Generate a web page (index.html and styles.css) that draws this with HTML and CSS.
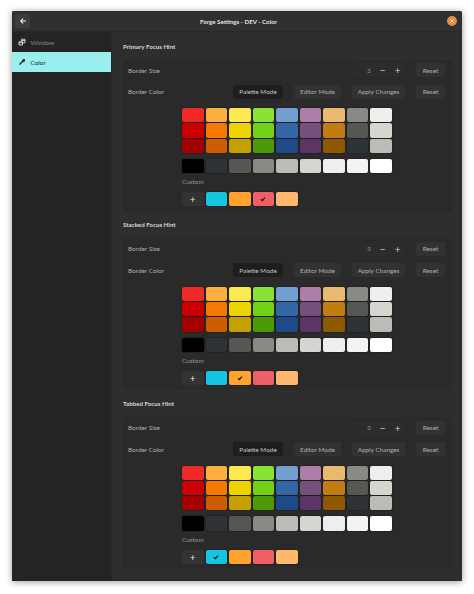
FILE: index.html
```html
<!DOCTYPE html>
<html lang="en">
<head>
<meta charset="utf-8">
<title>Forge Settings - DEV - Color</title>
<link rel="stylesheet" href="styles.css">
</head>
<body>
<div class="window">
  <header class="titlebar">
    <button class="back"><svg viewBox="0 0 16 16" class="ico"><path d="M14 7H6l3-3-1.500-1.500L2 8l5.500 5.500L9 12 6 9h8z" fill="#f2f2f2"/></svg></button>
    <div class="title">Forge Settings - DEV - Color</div>
    <button class="close"><svg viewBox="0 0 10 10" class="close-ico"><path d="M3.200 3.200l3.600 3.600M6.800 3.200l-3.600 3.600" stroke="#fbe3cf" stroke-width="1"/></svg></button>
  </header>
  <div class="body">
    <nav class="sidebar">
      <div class="nav-item"><svg viewBox="0 0 16 16" class="nav-ico"><path d="M6 2.500h8v7H9M2 7.500h7v6.500H2zM6 5h8M2 9.500h7" fill="none" stroke="#dcdcdc" stroke-width="1.800"/></svg><span>Window</span></div>
      <div class="nav-item selected"><svg viewBox="0 0 16 16" class="nav-ico"><path d="M2 14l1-3 5.500-5.500 2 2L5 13z" fill="#222"/><path d="M9 3.500l3-2.200 2.700 2.700-2.200 3 .8.800-1.300 1.300-4.300-4.300 1.300-1.300z" fill="#222"/></svg><span>Color</span></div>
    </nav>
    <main class="content">

      <section class="group">
        <h2>Primary Focus Hint</h2>
        <div class="frame">
          <div class="row">
            <span class="label">Border Size</span>
            <div class="spin"><span class="val">3</span><span class="op">−</span><span class="op">+</span></div>
            <button class="btn reset">Reset</button>
          </div>
          <div class="row">
            <span class="label">Border Color</span>
            <button class="btn active">Palette Mode</button>
            <button class="btn editor">Editor Mode</button>
            <button class="btn apply">Apply Changes</button>
            <button class="btn reset">Reset</button>
          </div>
          <div class="palette">
            <div class="grid">
              <i class="s c01"></i><i class="s c02"></i><i class="s c03"></i><i class="s c04"></i><i class="s c05"></i><i class="s c06"></i><i class="s c07"></i><i class="s c08"></i><i class="s c09"></i>
              <i class="s c11"></i><i class="s c12"></i><i class="s c13"></i><i class="s c14"></i><i class="s c15"></i><i class="s c16"></i><i class="s c17"></i><i class="s c18"></i><i class="s c19"></i>
              <i class="s c21"></i><i class="s c22"></i><i class="s c23"></i><i class="s c24"></i><i class="s c25"></i><i class="s c26"></i><i class="s c27"></i><i class="s c28"></i><i class="s c29"></i>
            </div>
            <div class="grid grays">
              <i class="s g1"></i><i class="s c28"></i><i class="s c18"></i><i class="s c08"></i><i class="s c29"></i><i class="s c19"></i><i class="s c09"></i><i class="s g8"></i><i class="s g9"></i>
            </div>
            <div class="custom-label">Custom</div>
            <div class="grid">
              <button class="add">+</button>
              <i class="s k1"></i><i class="s k2"></i><i class="s k3"><svg viewBox="0 0 16 16" class="check"><path d="M4 8.500l2.800 2.800L12 5" fill="none" stroke="#111" stroke-width="2.200"/></svg></i><i class="s k4"></i>
            </div>
          </div>
        </div>
      </section>

      <section class="group">
        <h2>Stacked Focus Hint</h2>
        <div class="frame">
          <div class="row">
            <span class="label">Border Size</span>
            <div class="spin"><span class="val">3</span><span class="op">−</span><span class="op">+</span></div>
            <button class="btn reset">Reset</button>
          </div>
          <div class="row">
            <span class="label">Border Color</span>
            <button class="btn active">Palette Mode</button>
            <button class="btn editor">Editor Mode</button>
            <button class="btn apply">Apply Changes</button>
            <button class="btn reset">Reset</button>
          </div>
          <div class="palette">
            <div class="grid">
              <i class="s c01"></i><i class="s c02"></i><i class="s c03"></i><i class="s c04"></i><i class="s c05"></i><i class="s c06"></i><i class="s c07"></i><i class="s c08"></i><i class="s c09"></i>
              <i class="s c11"></i><i class="s c12"></i><i class="s c13"></i><i class="s c14"></i><i class="s c15"></i><i class="s c16"></i><i class="s c17"></i><i class="s c18"></i><i class="s c19"></i>
              <i class="s c21"></i><i class="s c22"></i><i class="s c23"></i><i class="s c24"></i><i class="s c25"></i><i class="s c26"></i><i class="s c27"></i><i class="s c28"></i><i class="s c29"></i>
            </div>
            <div class="grid grays">
              <i class="s g1"></i><i class="s c28"></i><i class="s c18"></i><i class="s c08"></i><i class="s c29"></i><i class="s c19"></i><i class="s c09"></i><i class="s g8"></i><i class="s g9"></i>
            </div>
            <div class="custom-label">Custom</div>
            <div class="grid">
              <button class="add">+</button>
              <i class="s k1"></i><i class="s k2"><svg viewBox="0 0 16 16" class="check"><path d="M4 8.500l2.800 2.800L12 5" fill="none" stroke="#111" stroke-width="2.200"/></svg></i><i class="s k3"></i><i class="s k4"></i>
            </div>
          </div>
        </div>
      </section>

      <section class="group">
        <h2>Tabbed Focus Hint</h2>
        <div class="frame">
          <div class="row">
            <span class="label">Border Size</span>
            <div class="spin"><span class="val">3</span><span class="op">−</span><span class="op">+</span></div>
            <button class="btn reset">Reset</button>
          </div>
          <div class="row">
            <span class="label">Border Color</span>
            <button class="btn active">Palette Mode</button>
            <button class="btn editor">Editor Mode</button>
            <button class="btn apply">Apply Changes</button>
            <button class="btn reset">Reset</button>
          </div>
          <div class="palette">
            <div class="grid">
              <i class="s c01"></i><i class="s c02"></i><i class="s c03"></i><i class="s c04"></i><i class="s c05"></i><i class="s c06"></i><i class="s c07"></i><i class="s c08"></i><i class="s c09"></i>
              <i class="s c11"></i><i class="s c12"></i><i class="s c13"></i><i class="s c14"></i><i class="s c15"></i><i class="s c16"></i><i class="s c17"></i><i class="s c18"></i><i class="s c19"></i>
              <i class="s c21"></i><i class="s c22"></i><i class="s c23"></i><i class="s c24"></i><i class="s c25"></i><i class="s c26"></i><i class="s c27"></i><i class="s c28"></i><i class="s c29"></i>
            </div>
            <div class="grid grays">
              <i class="s g1"></i><i class="s c28"></i><i class="s c18"></i><i class="s c08"></i><i class="s c29"></i><i class="s c19"></i><i class="s c09"></i><i class="s g8"></i><i class="s g9"></i>
            </div>
            <div class="custom-label">Custom</div>
            <div class="grid">
              <button class="add">+</button>
              <i class="s k1"><svg viewBox="0 0 16 16" class="check"><path d="M4 8.500l2.800 2.800L12 5" fill="none" stroke="#111" stroke-width="2.200"/></svg></i><i class="s k2"></i><i class="s k3"></i><i class="s k4"></i>
            </div>
          </div>
        </div>
      </section>

    </main>
  </div>
</div>
</body>
</html>
```
FILE: styles.css
```css
* { box-sizing: border-box; }
html, body { margin: 0; height: 100%; }
body {
  background: #fff;
  padding: 11px 12px 13px;
  font-family: Lato, "Noto Sans", sans-serif;
  font-size: 6.400px;
  color: #c4c4c4;
  overflow: hidden;
}
button { font: inherit; color: inherit; border: 0; padding: 0; margin: 0; }

.window {
  height: 570px;
  display: flex;
  flex-direction: column;
  background: #2e2e2e;
  box-shadow: 0 1px 7px rgba(0,0,0,.4);
  border-radius: 2px 2px 0 0;
  overflow: hidden;
}

.titlebar {
  height: 21px;
  flex: none;
  display: flex;
  align-items: center;
  justify-content: space-between;
  padding: 0 5px 0 3px;
  background: #303030;
  border-bottom: 1px solid #282828;
}
.back {
  width: 15px;
  height: 14px;
  display: flex;
  align-items: center;
  justify-content: center;
  background: #3c3c3c;
  border-radius: 2px;
}
.ico { width: 8px; height: 8px; }
.title {
  flex: 1;
  text-align: center;
  font-size: 6.200px;
  font-weight: 700;
  color: #e4e4e4;
}
.close {
  width: 10px;
  height: 10px;
  border-radius: 50%;
  background: #ea8a3d;
  display: flex;
}
.close-ico { width: 10px; height: 10px; }

.body { flex: 1; display: flex; min-height: 0; }

.sidebar {
  width: 100px;
  flex: none;
  background: #242424;
  border-right: 1px solid #282828;
}
.nav-item {
  height: 20px;
  display: flex;
  align-items: center;
  gap: 4.500px;
  padding-left: 6px;
  color: #8a8a8a;
}
.nav-ico { width: 8px; height: 8px; flex: none; }
.nav-item.selected { background: #99eeee; color: #1f2a2a; }

.content { flex: 1; padding: 0 10px 0 11px; min-width: 0; }

.group { height: 178.700px; padding-top: 9.500px; }
h2 {
  margin: 0 0 9px;
  font-size: 6.200px;
  line-height: 9px;
  font-weight: 700;
  color: #d8d8d8;
}
.frame {
  background: #2a2a2a;
  border-radius: 2px;
  height: 152px;
  padding: 0 7px 0 5px;
}
.row {
  height: 21.500px;
  display: flex;
  align-items: center;
  gap: 11px;
}
.label { flex: 1; color: #b0b0b0; }
.btn {
  height: 14px;
  width: 50px;
  background: #323232;
  color: #b0b0b0;
  border-radius: 2px;
  text-align: center;
  white-space: nowrap;
}
.btn.editor { width: 47px; }
.btn.apply { width: 53px; }
.btn.reset { width: 29px; }
.btn.active { background: #1e1e1e; color: #c4c4c4; }
.spin {
  width: 52px;
  height: 14px;
  display: flex;
  align-items: center;
  background: #2c2c2c;
  border-radius: 2px;
  padding-left: 14px;
}
.val { width: 9px; color: #909090; }
.op { width: 16px; text-align: center; font-size: 10px; line-height: 14px; color: #d0d0d0; }

.palette { padding: 5.700px 0 0 54px; }
.grid {
  display: grid;
  grid-template-columns: repeat(9, 21.500px);
  grid-auto-rows: 14.300px;
  column-gap: 2px;
  row-gap: 1px;
}
.grays { margin-top: 6px; }
.custom-label { height: 18.800px; line-height: 18.800px; color: #999; }

.s {
  display: flex;
  align-items: center;
  justify-content: center;
  border-radius: 2px;
  box-shadow: 0 0 0 .5px rgba(0,0,0,.3);
}
.add {
  background: #333;
  border-radius: 2px;
  color: #e0e0e0;
  font-size: 10px;
  line-height: 14px;
}
.check { width: 8px; height: 8px; }

.c01 { background: #ef2929; } .c02 { background: #fcaf3e; } .c03 { background: #fce94f; }
.c04 { background: #8ae234; } .c05 { background: #729fcf; } .c06 { background: #ad7fa8; }
.c07 { background: #e9b96e; } .c08 { background: #888a85; } .c09 { background: #eeeeec; }
.c11 { background: #cc0000; } .c12 { background: #f57900; } .c13 { background: #edd400; }
.c14 { background: #73d216; } .c15 { background: #3465a4; } .c16 { background: #75507b; }
.c17 { background: #c17d11; } .c18 { background: #555753; } .c19 { background: #d3d7cf; }
.c21 { background: #a40000; } .c22 { background: #ce5c00; } .c23 { background: #c4a000; }
.c24 { background: #4e9a06; } .c25 { background: #204a87; } .c26 { background: #5c3566; }
.c27 { background: #8f5902; } .c28 { background: #2e3436; } .c29 { background: #babdb6; }
.g1 { background: #000; } .g8 { background: #f3f3f3; } .g9 { background: #fff; }
.k1 { background: #16c5e2; } .k2 { background: #ffa32e; } .k3 { background: #ee5f68; } .k4 { background: #ffb86c; }
```
